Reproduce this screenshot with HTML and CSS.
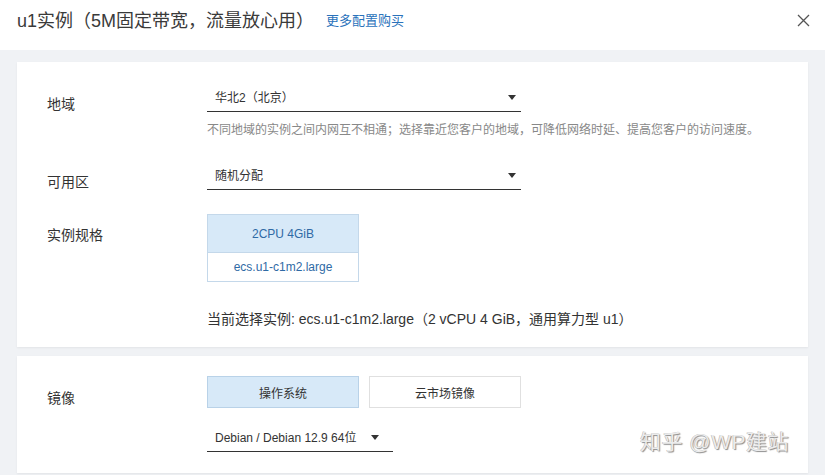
FILE: index.html
```html
<!DOCTYPE html>
<html lang="zh-CN">
<head>
<meta charset="utf-8">
<title>u1实例</title>
<link rel="stylesheet" href="styles.css">
</head>
<body>
<div class="page">
  <header class="header">
    <div class="title-group">
      <h1 class="title">u1实例（5M固定带宽，流量放心用）</h1>
      <a class="more-link" href="#">更多配置购买</a>
    </div>
    <button class="close" aria-label="关闭">
      <svg width="13" height="13" viewBox="0 0 13 13"><path d="M1 1L12 12M12 1L1 12" stroke="#555" stroke-width="1.3" fill="none"/></svg>
    </button>
  </header>
  <main class="body">
    <section class="card card-top">
      <div class="row">
        <div class="label">地域</div>
        <div class="control">
          <div class="select select-wide"><span>华北2（北京）</span><i class="caret"></i></div>
          <div class="help">不同地域的实例之间内网互不相通；选择靠近您客户的地域，可降低网络时延、提高您客户的访问速度。</div>
        </div>
      </div>
      <div class="row row-zone">
        <div class="label">可用区</div>
        <div class="control">
          <div class="select select-wide"><span>随机分配</span><i class="caret"></i></div>
        </div>
      </div>
      <div class="row row-spec">
        <div class="label label-spec">实例规格</div>
        <div class="control">
          <div class="spec">
            <div class="spec-head">2CPU 4GiB</div>
            <div class="spec-name">ecs.u1-c1m2.large</div>
          </div>
          <div class="current">当前选择实例: ecs.u1-c1m2.large（2 vCPU 4 GiB，通用算力型 u1）</div>
        </div>
      </div>
    </section>
    <section class="card card-bottom">
      <div class="row">
        <div class="label">镜像</div>
        <div class="control">
          <div class="tabs">
            <button class="tab tab-active">操作系统</button>
            <button class="tab">云市场镜像</button>
          </div>
          <div class="select select-os"><span>Debian / Debian 12.9 64位</span><i class="caret"></i></div>
        </div>
      </div>
    </section>
  </main>
  <div class="watermark">知乎 @WP建站</div>
</div>
</body>
</html>
```
FILE: styles.css
```css
* { box-sizing: border-box; }
html, body { margin: 0; padding: 0; }
body {
  font-family: "Liberation Sans", "Noto Sans CJK SC", sans-serif;
  color: #333;
  background: #f0f2f5;
  width: 825px;
  height: 475px;
  overflow: hidden;
}
.page { position: relative; width: 825px; height: 475px; }
.header {
  height: 50px;
  background: #fff;
  display: flex;
  align-items: flex-start;
  justify-content: space-between;
  padding: 0 15px 0 17px;
}
.title-group { display: flex; align-items: center; height: 38px; }
.title {
  margin: 0;
  font-size: 18px;
  font-weight: normal;
  color: #3a3a3a;
}
.more-link {
  margin-left: 12px;
  font-size: 13px;
  color: #2a72bb;
  text-decoration: none;
  padding-top: 1px;
}
.close {
  margin-top: 14px;
  padding: 0;
  border: 0;
  background: none;
  width: 13px;
  height: 13px;
  display: block;
}
.close svg { display: block; }
.body { padding: 12px 17px 0 17px; }
.card {
  background: #fff;
  box-shadow: 0 1px 2px rgba(0,0,0,0.06);
  padding: 20px 30px 20px 30px;
}
.card-top { height: 285px; }
.card-bottom { margin-top: 9px; height: 117px; padding-bottom: 0; }
.row { display: flex; align-items: flex-start; }
.label {
  width: 160px;
  flex: none;
  font-size: 14px;
  line-height: 20px;
  padding-top: 12px;
  color: #333;
}
.label-spec { padding-top: 11px; }
.control { flex: 1; }
.select {
  height: 30px;
  border-bottom: 1px solid #333;
  display: flex;
  align-items: center;
  justify-content: space-between;
  padding: 0 5px 0 8px;
  font-size: 12px;
  color: #333;
}
.select-wide { width: 314px; }
.select-os { width: 186px; margin-top: 14px; padding-right: 14px; }
.caret {
  width: 0;
  height: 0;
  border-left: 4.5px solid transparent;
  border-right: 4.5px solid transparent;
  border-top: 5px solid #333;
  margin-top: 1px;
}
.help {
  margin-top: 9px;
  font-size: 12px;
  line-height: 18px;
  color: #888;
}
.row-zone { margin-top: 21px; }
.row-spec { margin-top: 22px; }
.spec {
  width: 152px;
  border: 1px solid #c4d8ea;
  font-size: 12px;
  color: #2f6aa5;
  text-align: center;
}
.spec-head {
  height: 38px;
  line-height: 38px;
  background: #d7e9f8;
  border-bottom: 1px solid #c4d8ea;
}
.spec-name { height: 28px; line-height: 28px; background: #fff; }
.current {
  margin-top: 27px;
  font-size: 14px;
  line-height: 20px;
  color: #333;
}
.tabs { display: flex; gap: 10px; }
.tab {
  width: 152px;
  height: 32px;
  border: 1px solid #e0e0e0;
  background: #fff;
  font-family: inherit;
  font-size: 12px;
  color: #333;
  padding: 0;
}
.tab-active { background: #d7e9f8; border-color: #b9d2e8; }
.watermark {
  position: absolute;
  left: 640px;
  top: 429px;
  font-size: 21px;
  line-height: 26px;
  color: #ececec;
  text-shadow: 1px 1px 1px #8a8a8a, -0.5px -0.5px 0 #b5b5b5;
  letter-spacing: 0.5px;
}
```
